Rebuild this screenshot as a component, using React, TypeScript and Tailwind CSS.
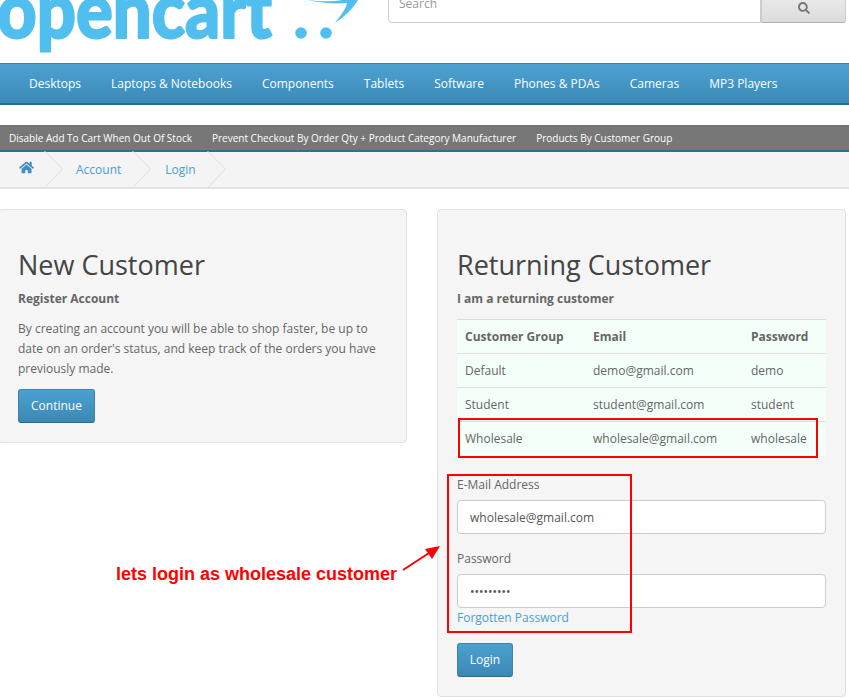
import { FaHome, FaSearch } from "react-icons/fa";

const menu = ["Desktops", "Laptops & Notebooks", "Components", "Tablets", "Software", "Phones & PDAs", "Cameras", "MP3 Players"];
const extras = ["Disable Add To Cart When Out Of Stock", "Prevent Checkout By Order Qty + Product Category Manufacturer", "Products By Customer Group"];
const rows = [
  ["Default", "demo@gmail.com", "demo"],
  ["Student", "student@gmail.com", "student"],
  ["Wholesale", "wholesale@gmail.com", "wholesale"],
];

const Chevron = () => (
  <svg width="19" height="37" viewBox="0 0 19 37" className="shrink-0" fill="none" stroke="#dedede">
    <path d="M0.5 0 L18.5 18 L0.5 37" />
  </svg>
);

const BlueButton = ({ label, className }: { label: string; className: string }) => (
  <button className={`h-[34px] rounded-[3px] border border-[#3f83ac] border-b-[#2c6a8e] bg-gradient-to-b from-[#4ba1d0] to-[#3c88b5] text-[12px] text-white ${className}`}>
    {label}
  </button>
);

const App = () => {
  return (
    <div className="relative h-[699px] w-[849px] overflow-hidden bg-white font-['Open_Sans',sans-serif] text-[12px] text-[#666]">
      {/* header */}
      <div className="flex h-[63px] items-start justify-between overflow-hidden pr-[3px]">
        <svg width="365" height="56" viewBox="0 0 365 56" className="shrink-0">
          <text
            x="-3"
            y="38"
            textLength="275"
            lengthAdjust="spacingAndGlyphs"
            fontFamily="Lato, sans-serif"
            fontWeight="900"
            fontSize="78"
            fill="#50bff0"
            stroke="#50bff0"
            strokeWidth="2"
            strokeLinejoin="round"
          >
            opencart
          </text>
          <circle cx="301" cy="33" r="5.8" fill="#50bff0" />
          <circle cx="326" cy="33" r="5.8" fill="#50bff0" />
          <path d="M307 0 C322 2 340 2 350 -2 L359 -2 C354 8 345 16 335 23 C341 15 346 9 347 3 C337 4 320 3 307 0 Z" fill="#50bff0" />
        </svg>
        <div className="-mt-[12px] flex h-[35px] w-[458px]">
          <input
            placeholder="Search"
            className="h-full w-[373px] rounded-l-[4px] border border-[#ccc] bg-white px-[10px] pb-[5px] text-[12px] placeholder:text-[#999]"
          />
          <button className="flex h-full w-[85px] items-center justify-center rounded-r-[3px] border border-[#ccc] border-b-[#b3b3b3] bg-gradient-to-b from-[#eeeeee] to-[#dcdcdc] pt-[5px] text-[#777]">
            <FaSearch size={12} />
          </button>
        </div>
      </div>

      {/* menu */}
      <nav className="flex h-[42px] items-center border-t border-b-2 border-t-[#3a83ad] border-b-[#2d6a8e] bg-gradient-to-b from-[#4ba1d1] to-[#3d8ab8] pl-[14px] text-[12px] text-white">
        {menu.map((item) => (
          <a key={item} className="px-[15px]">
            {item}
          </a>
        ))}
      </nav>

      {/* extras bar */}
      <div className="mt-[20px] flex h-[27px] items-center border-t border-b-2 border-t-[#3f82a8] border-b-[#2f6f95] bg-[#777] text-[10px] text-white">
        {extras.map((item) => (
          <a key={item} className="ml-[9px] mr-[11px]">
            {item}
          </a>
        ))}
      </div>

      {/* breadcrumb */}
      <div className="flex h-[37px] items-center border-b-2 border-[#e3e3e3] bg-[#f4f4f4] pl-[19px] text-[12px] text-[#4a9fd0]">
        <FaHome size={15} className="mr-[10px] -mt-[4px] w-[15px] text-[#3f8fc4]" />
        <Chevron />
        <a className="ml-[13px] mr-[11px]">Account</a>
        <Chevron />
        <a className="ml-[14px] mr-[11px]">Login</a>
        <Chevron />
      </div>

      {/* columns */}
      <div className="-ml-[2px] mt-[20px] flex items-start gap-[30px]">
        <div className="h-[234px] w-[409px] rounded-[4px] border border-[#e0e0e0] bg-[#f5f5f5] px-[19px] pt-[36px]">
          <h2 className="text-[27px] leading-[38px] text-[#444]">New Customer</h2>
          <p className="mt-[5px] font-bold leading-[20px]">Register Account</p>
          <p className="mt-[10px] leading-[20px]">
            By creating an account you will be able to shop faster, be up to date on an order's status, and keep track of the orders you have previously made.
          </p>
          <BlueButton label="Continue" className="mt-[10px] w-[77px]" />
        </div>

        <div className="h-[488px] w-[409px] rounded-[4px] border border-[#e0e0e0] bg-[#f5f5f5] px-[19px] pt-[36px]">
          <h2 className="text-[27px] leading-[38px] text-[#444]">Returning Customer</h2>
          <p className="mt-[5px] font-bold leading-[20px]">I am a returning customer</p>
          <table className="mt-[10px] w-[369px] table-fixed border-collapse bg-[#f4fff9]">
            <colgroup>
              <col className="w-[128px]" />
              <col className="w-[158px]" />
              <col />
            </colgroup>
            <thead>
              <tr className="h-[34px] border-t border-[#ddd] font-bold">
                <td className="px-[8px]">Customer Group</td>
                <td className="px-[8px]">Email</td>
                <td className="px-[8px]">Password</td>
              </tr>
            </thead>
            <tbody>
              {rows.map((row) => (
                <tr key={row[0]} className="h-[34px] border-t border-[#ddd]">
                  {row.map((cell) => (
                    <td key={cell} className="px-[8px]">
                      {cell}
                    </td>
                  ))}
                </tr>
              ))}
            </tbody>
          </table>

          <label className="mt-[19px] block leading-[20px]">E-Mail Address</label>
          <input
            defaultValue="wholesale@gmail.com"
            className="mt-[5px] block h-[34px] w-[369px] rounded-[4px] border border-[#ccc] bg-white px-[12px] pt-[2px] text-[12px] text-[#555]"
          />
          <label className="mt-[15px] block leading-[20px]">Password</label>
          <input
            type="password"
            defaultValue="wholesale"
            className="mt-[5px] block h-[34px] w-[369px] rounded-[4px] border border-[#ccc] bg-white px-[12px] pt-[2px] text-[12px] text-[#555]"
          />
          <a className="block leading-[20px] text-[#4a9fd0]">Forgotten Password</a>
          <BlueButton label="Login" className="mt-[15px] w-[56px]" />
        </div>
      </div>

      {/* red annotations */}
      <div className="absolute left-[458px] top-[418px] h-[40px] w-[360px] border-2 border-[#f00]" />
      <div className="absolute left-[447px] top-[474px] h-[159px] w-[185px] border-2 border-[#f00]" />
      <span className="absolute left-[116px] top-[564px] font-['Liberation_Sans',sans-serif] text-[18px] font-bold leading-[20px] text-[#f00]">
        lets login as wholesale customer
      </span>
      <svg width="44" height="32" viewBox="0 0 44 32" className="absolute left-[400px] top-[543px]" fill="#f00" stroke="none">
        <path d="M3 27 L29 10" stroke="#f00" strokeWidth="2" />
        <path d="M40 3 L32 16 L25 6 Z" />
      </svg>
    </div>
  );
};

export default App;
